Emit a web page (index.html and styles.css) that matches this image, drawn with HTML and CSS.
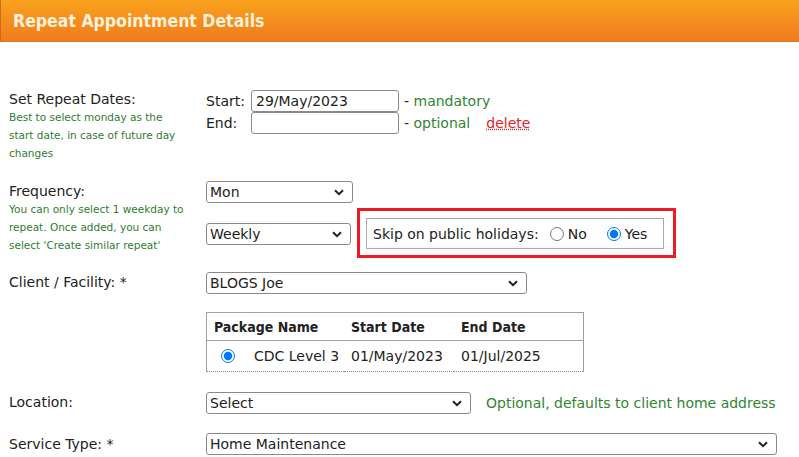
FILE: index.html
```html
<!DOCTYPE html>
<html>
<head>
<meta charset="utf-8">
<link rel="stylesheet" href="styles.css">
</head>
<body>
<div class="header"><h1>Repeat Appointment Details</h1></div>
<div class="form">
  <div class="row row-dates">
    <div class="label">Set Repeat Dates:
      <div class="hint">Best to select monday as the<br>start date, in case of future day<br>changes</div>
    </div>
    <div class="ctrl">
      <div class="line"><span class="lbl">Start:</span><input class="date" type="text" value="29/May/2023"><span class="note">- <span class="green">mandatory</span></span></div>
      <div class="line"><span class="lbl">End:</span><input class="date" type="text" value=""><span class="note">- <span class="green">optional</span></span><span class="delete">delete</span></div>
    </div>
  </div>

  <div class="row row-freq">
    <div class="label label-freq">Frequency:
      <div class="hint">You can only select 1 weekday to<br>repeat. Once added, you can<br>select 'Create similar repeat'</div>
    </div>
    <div class="ctrl">
      <span class="selwrap"><select class="sel sel-mon"><option>Mon</option></select><svg class="chev" viewBox="0 0 10 7"><path d="M1 1.2l4 4 4-4"/></svg></span>
      <div class="freq-line">
        <span class="selwrap"><select class="sel sel-weekly"><option>Weekly</option></select><svg class="chev" viewBox="0 0 10 7"><path d="M1 1.2l4 4 4-4"/></svg></span>
        <div class="skipbox">
          <div class="skip">
            <span>Skip on public holidays:</span>
            <input type="radio" name="skip" class="rad rad-no"><span>No</span>
            <input type="radio" name="skip" class="rad rad-yes" checked><span>Yes</span>
          </div>
        </div>
      </div>
    </div>
  </div>

  <div class="row row-client">
    <div class="label">Client / Facility: *</div>
    <div class="ctrl">
      <span class="selwrap"><select class="sel sel-client"><option>BLOGS Joe</option></select><svg class="chev" viewBox="0 0 10 7"><path d="M1 1.2l4 4 4-4"/></svg></span>
    </div>
  </div>

  <div class="row row-pkg">
    <div class="label"></div>
    <div class="ctrl">
      <table class="pkg">
        <thead>
          <tr><th class="c1">Package Name</th><th class="c2">Start Date</th><th class="c3">End Date</th></tr>
        </thead>
        <tbody>
          <tr><td class="c1"><input type="radio" class="rad rad-pkg" checked>CDC Level 3</td><td class="c2">01/May/2023</td><td class="c3">01/Jul/2025</td></tr>
        </tbody>
      </table>
    </div>
  </div>

  <div class="row row-loc">
    <div class="label">Location:</div>
    <div class="ctrl ctrl-inline">
      <span class="selwrap"><select class="sel sel-loc"><option>Select</option></select><svg class="chev" viewBox="0 0 10 7"><path d="M1 1.2l4 4 4-4"/></svg></span>
      <span class="green loc-note">Optional, defaults to client home address</span>
    </div>
  </div>

  <div class="row row-svc">
    <div class="label">Service Type: *</div>
    <div class="ctrl">
      <span class="selwrap"><select class="sel sel-svc"><option>Home Maintenance</option></select><svg class="chev" viewBox="0 0 10 7"><path d="M1 1.2l4 4 4-4"/></svg></span>
    </div>
  </div>
</div>
</body>
</html>
```

FILE: styles.css
```css
html, body {
  margin: 0;
  background: #fff;
}
body {
  font-family: "DejaVu Sans", sans-serif;
  font-size: 14px;
  color: #222;
  overflow: hidden;
}
.header {
  height: 42px;
  box-sizing: border-box;
  background: linear-gradient(#f9a21d, #f07b1e);
  border-left: 1px solid #c96d1c;
  border-bottom: 1px solid #e07a20;
  display: flex;
  align-items: center;
  padding-left: 12px;
}
.header h1 {
  margin: 0;
  font-family: "DejaVu Sans Condensed", "DejaVu Sans", sans-serif;
  font-stretch: semi-condensed;
  font-size: 17.5px;
  font-weight: bold;
  color: #fdf1da;
}
.form {
  padding: 48px 0 0 9px;
}
.row {
  display: flex;
}
.label {
  width: 197px;
  flex: none;
  line-height: 18px;
}
.hint {
  font-size: 10.5px;
  line-height: 18px;
  color: #2f7d2f;
}
.green {
  color: #2f862f;
}
.ctrl {
  display: flex;
  flex-direction: column;
  align-items: flex-start;
}
.line {
  display: flex;
  align-items: center;
  height: 22px;
}
.lbl {
  width: 45px;
}
.date {
  width: 148px;
  height: 22px;
  box-sizing: border-box;
  border: 1px solid #8a8a8a;
  border-radius: 3px;
  padding: 0 4px;
  margin: 0;
  font: inherit;
  color: #222;
}
.note {
  margin-left: 5px;
}
.delete {
  margin-left: 16px;
  color: #e3202a;
  text-decoration: underline dotted #e3202a;
}
.selwrap {
  position: relative;
  display: inline-block;
  height: 22px;
}
.sel {
  display: block;
  height: 22px;
  box-sizing: border-box;
  border: 1px solid #8a8a8a;
  border-radius: 3px;
  background-color: #fff;
  appearance: none;
  -webkit-appearance: none;
  font: inherit;
  color: #222;
  margin: 0;
  padding: 0 24px 0 3px;
}
.chev {
  position: absolute;
  right: 9px;
  top: 8px;
  width: 10px;
  height: 7px;
  fill: none;
  stroke: #222;
  stroke-width: 2;
  pointer-events: none;
}
.row-freq {
  margin-top: 19px;
}
.label-freq {
  padding-top: 1px;
}
.sel-mon {
  width: 147px;
}
.freq-line {
  display: flex;
  align-items: center;
  margin-top: 5px;
}
.freq-line .selwrap {
  margin-top: 2px;
}
.sel-weekly {
  width: 145px;
}
.skipbox {
  margin-left: 6px;
  border: 3px solid #ec1c24;
  padding: 7px 9px 6px 6px;
}
.skip {
  width: 298px;
  height: 31px;
  box-sizing: border-box;
  border: 1px solid #a9a9a9;
  display: flex;
  align-items: center;
  padding-left: 6px;
}
.rad {
  width: 14px;
  height: 14px;
  margin: 0;
  accent-color: #0075ff;
}
.rad-no {
  margin-left: 11px;
  margin-right: 4px;
}
.rad-yes {
  margin-left: 20px;
  margin-right: 4px;
}
.row-client {
  margin-top: 14px;
}
.row-client .label {
  padding-top: 1px;
}
.sel-client {
  width: 321px;
}
.row-pkg {
  margin-top: 18px;
}
.pkg {
  width: 378px;
  border-collapse: separate;
  border-spacing: 0;
  border: 1px solid #a0a0a0;
  border-bottom: none;
}
.pkg th {
  text-align: left;
  font-family: "DejaVu Sans Condensed", "DejaVu Sans", sans-serif;
  font-stretch: semi-condensed;
  font-weight: bold;
  height: 27px;
  padding: 0 0 0 7px;
  border-bottom: 1px solid #a0a0a0;
  vertical-align: middle;
}
.pkg td {
  height: 30px;
  padding: 0 0 0 7px;
  border-bottom: 1px dotted #888;
  vertical-align: middle;
  white-space: nowrap;
}
.pkg .c1 {
  width: 130px;
}
.pkg .c2 {
  width: 103px;
}
.rad-pkg {
  margin: 0 19px 0 7px;
  vertical-align: -2px;
}
.row-loc {
  margin-top: 20px;
}
.row-loc .label {
  padding-top: 1px;
}
.ctrl-inline {
  flex-direction: row;
  align-items: center;
}
.sel-loc {
  width: 265px;
}
.loc-note {
  margin-left: 15px;
}
.row-svc {
  margin-top: 19px;
}
.row-svc .label {
  padding-top: 2px;
}
.sel-svc {
  width: 571px;
}
```
